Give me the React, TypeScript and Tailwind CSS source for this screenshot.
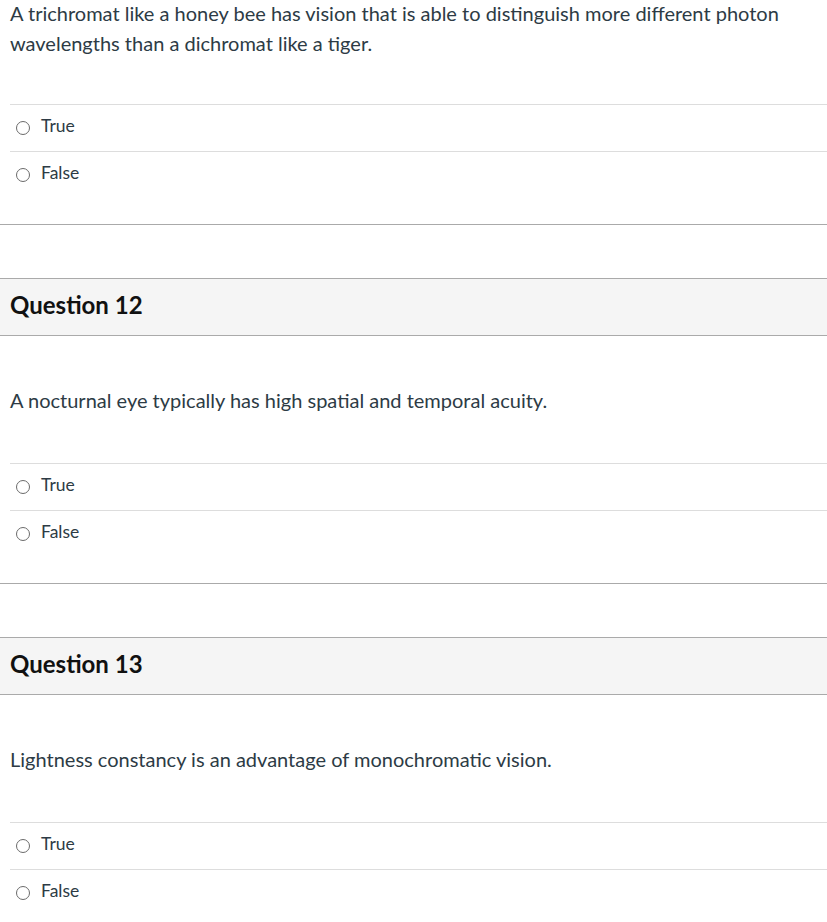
const questions = [
  {
    id: 11,
    text: 'A trichromat like a honey bee has vision that is able to distinguish more different photon wavelengths than a dichromat like a tiger.',
  },
  { id: 12, text: 'A nocturnal eye typically has high spatial and temporal acuity.' },
  { id: 13, text: 'Lightness constancy is an advantage of monochromatic vision.' },
];

function Radio() {
  return <span className="block h-[14px] w-[14px] shrink-0 rounded-full border border-[#6b6b6b] bg-white" />;
}

function Question({ id, text, showHeader }: { id: number; text: string; showHeader: boolean }) {
  return (
    <div className="border-b border-[#aaaaaa]">
      {showHeader && (
        <div className="flex h-[58px] items-center border-y border-[#aaaaaa] bg-[#f5f5f5] px-[10px]">
          <h2 className="pb-[4px] text-[24px] font-bold text-[#111]">Question {id}</h2>
        </div>
      )}
      <div className={showHeader ? 'pt-[49px] pl-[10px]' : 'pl-[10px]'}>
        <p className={showHeader ? 'text-[20px] leading-[30px]' : '-mt-[2px] text-[20px] leading-[30px]'}>{text}</p>
        <div className={showHeader ? 'mt-[48px] pb-[26px]' : 'mt-[46px] pb-[26px]'}>
          {['True', 'False'].map((a) => (
            <div key={a} className="flex h-[47px] items-center gap-[11px] border-t border-[#dddddd] pl-[6px]">
              <Radio />
              <span className="pb-[3px] text-[17.5px]">{a}</span>
            </div>
          ))}
        </div>
      </div>
    </div>
  );
}

export default function App() {
  return (
    <div className="min-h-screen bg-white font-['Lato',sans-serif] text-[#2d3b45]">
      {questions.map((q, i) => (
        <div key={q.id} className={i > 0 ? 'mt-[53px]' : ''}>
          <Question id={q.id} text={q.text} showHeader={i > 0} />
        </div>
      ))}
    </div>
  );
}
